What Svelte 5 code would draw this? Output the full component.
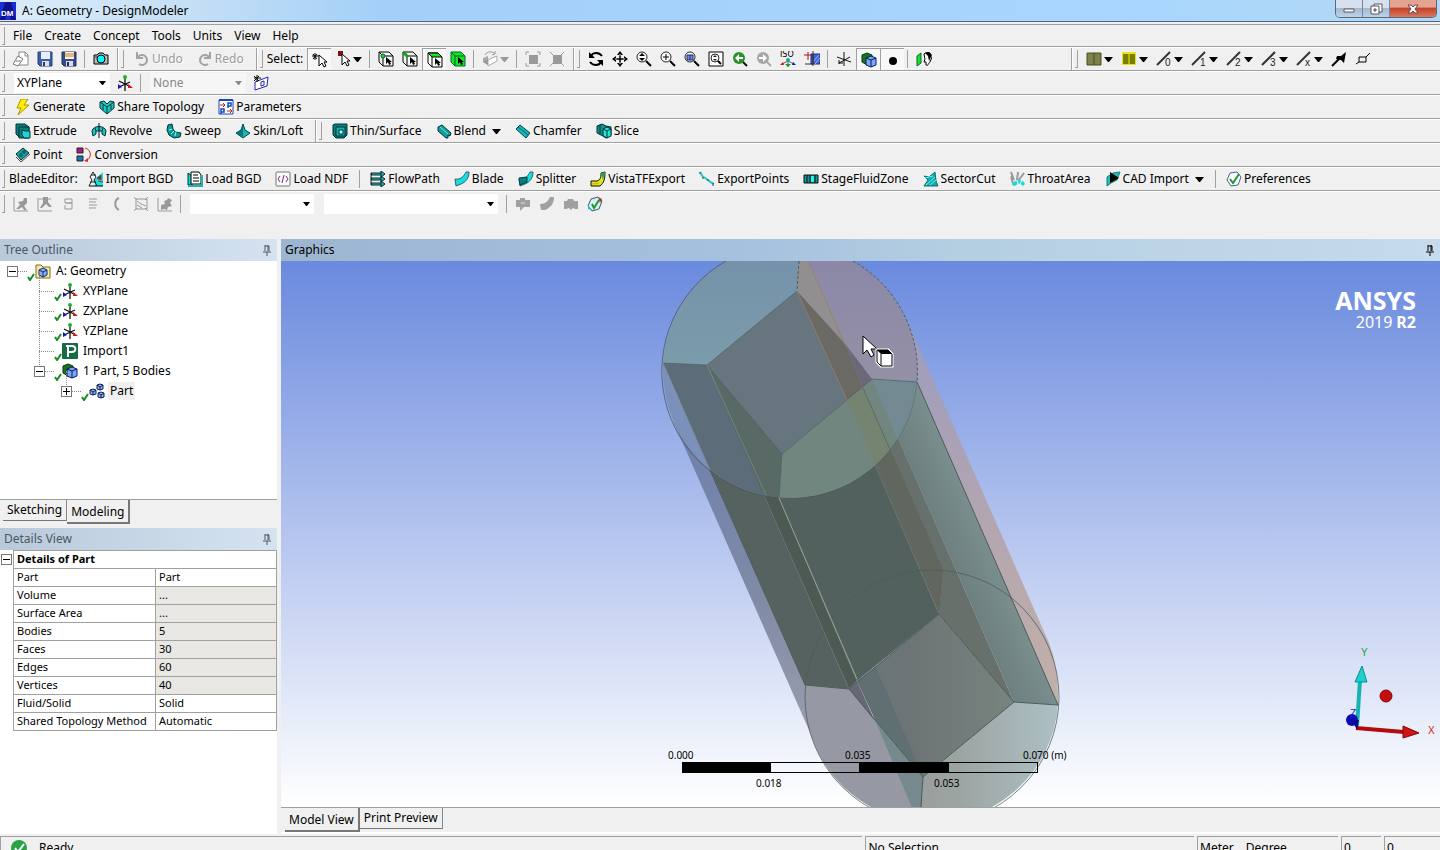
<script>
    const menus = ["File", "Create", "Concept", "Tools", "Units", "View", "Help"];

    const cursor = '<path d="M7 3v11l3-3 2 4 2-1-2-4h3z" fill="#fff" stroke="#000"/>';
    const smallCursor = '<path d="M8 6v7l2-2 1 3 2-1-1-2h2z" fill="#000"/>';
    const cubeOutline = '<path d="M1 1h10l4 4v10H5L1 11zM1 1l4 4h10M5 5v10" fill="#f4f4f4" stroke="#000"/>';
    const lens = '<path d="M10 10l5 5" stroke="#000" stroke-width="2"/><circle cx="6" cy="6" r="5" fill="#fff" stroke="#222"/>';
    const cubes = '<path d="M1 3l5-2 5 2v7l-5 3-5-3z" fill="#17721f" stroke="#053b0b"/><path d="M5 6l5-2 5 2v7l-5 2-5-2z" fill="#79a7f5" stroke="#0a1c5c"/><path d="M5 6l5 2 5-2M10 8v7" fill="none" stroke="#0a1c5c"/>';
    const blade = '<path d="M1 8c6 1 9-3 11-7l3 0c0 6-3 10-8 12l-5 2z" fill="#12dfe0" stroke="#35636a"/>';

    function edgeIcon(label) {
        return `<path d="M1 14L14 1" stroke="#333" stroke-width="2"/><text x="9" y="15" font-size="10" font-family="Liberation Sans, sans-serif" fill="#222">${label}</text>`;
    }

    const icons = {
        new: '<path d="M6 1h6l3 3v10H6z" fill="#fff" stroke="#888"/><path d="M12 1v4h3" fill="none" stroke="#888"/><path d="M0 13l5-8 5 3-5 7z" fill="#fff" stroke="#777"/><path d="M3 9h5v2H2z" fill="#bbb"/>',
        save: '<path d="M1 1h14v14H3l-2-2z" fill="#3d5fa8" stroke="#263f7b"/><path d="M4 1h9v7H4z" fill="#e8eefb"/><path d="M5 10h7v5H5z" fill="#ddd"/><path d="M6 11h2v4H6z" fill="#263f7b"/>',
        saveAs: '<path d="M1 1h14v14H3l-2-2z" fill="#2f4d8b" stroke="#1e315f"/><path d="M4 1h9v7H4z" fill="#fff2d8"/><path d="M4 3h9M4 5h9" stroke="#c47a24"/><path d="M5 10h7v5H5z" fill="#ddd"/><path d="M6 11h2v4H6z" fill="#1e315f"/>',
        camera: '<path d="M1 4h3l2-2h4l2 2h3v9H1z" fill="#b8b8b8" stroke="#000"/><circle cx="8" cy="8" r="4" fill="#0ff" stroke="#000"/><path d="M2 6h2" stroke="#c00"/>',
        undo: '<path d="M3 1v6h6M4 6a5 5 0 1 1 1 7" fill="none" stroke="#a3a3a3" stroke-width="2"/>',
        redo: '<path d="M13 1v6H7M12 6a5 5 0 1 0-1 7" fill="none" stroke="#a3a3a3" stroke-width="2"/>',
        selectNew: '<path d="M3 1v7M0 4h7M1 2l4 5M5 2L1 7" stroke="#000"/>' + cursor,
        selectMode: '<path d="M3 0h5v5H3z" fill="#7d0d13"/>' + cursor,
        point: cubeOutline + smallCursor + '<circle cx="5" cy="5" r="2" fill="#1edb24" stroke="#063"/>',
        edge: cubeOutline + smallCursor + '<path d="M1 1l5 5" stroke="#14a01b" stroke-width="3"/>',
        face: '<path d="M1 1h10l4 4v10H5L1 11z" fill="#fff" stroke="#000"/><path d="M1 1h10l4 4H5z" fill="#1be322" stroke="#000"/><path d="M5 5v10" stroke="#000"/>' + smallCursor,
        body: '<path d="M1 1h10l4 4v10H5L1 11z" fill="#1be322" stroke="#063"/><path d="M1 1l4 4h10M5 5v10" fill="none" stroke="#063"/>' + smallCursor,
        extend: '<path d="M1 7l5-2v9l-5-3z" fill="#aaa"/><path d="M6 9l4-2 5-2v5l-9 5z" fill="#fff" stroke="#aaa"/><path d="M1 11l5-3v6z" fill="#999"/><path d="M3 4c2-4 8-4 10-1l-3 1M13 0v3" fill="none" stroke="#999"/>',
        expand: '<path d="M4 4h9v9H4z" fill="#999"/><path d="M1 4V1h3M12 1h3v3M15 12v3h-3M4 15H1v-3" fill="none" stroke="#999"/>',
        shrink: '<path d="M4 4h9v9H4z" fill="#999"/><path d="M1 1l4 4M15 1l-4 4M15 15l-4-4M1 15l4-4" stroke="#999"/>',
        rotate: '<path d="M3 5c2-4 8-4 11 0M13 11c-2 4-8 4-11 0" fill="none" stroke="#000" stroke-width="2"/><path d="M1 1v6h6zM15 15V9H9z"/>',
        pan: '<path d="M8 2v12M2 8h12" stroke="#000"/><path d="M8 0l3 4H5zM8 16l3-4H5zM0 8l4-3v6zM16 8l-4-3v6z" fill="#000"/><path d="M7 3h2v2H7zM7 11h2v2H7zM3 7h2v2H3zM11 7h2v2h-2z" fill="#f0f0f0"/><path d="M8 2v12M2 8h12" stroke="#000"/>',
        zoom: lens + '<path d="M6 2l3 3H3zM6 10l3-3H3z"/>',
        zoomIn: lens + '<path d="M6 3v6M3 6h6" stroke="#000"/>',
        zoomBox: lens + '<path d="M3 4h6v5H3z" fill="#6c90e0" stroke="#15286f"/><path d="M6 4v5" stroke="#15286f"/>',
        zoomFit: '<path d="M1 1h14v14H1z" fill="#fff" stroke="#000"/><path d="M9 9l4 4" stroke="#000" stroke-width="2"/><circle cx="7" cy="7" r="4" fill="#fff" stroke="#222"/><path d="M7 4l2 2H5zM7 10l2-2H5z" fill="#222"/>',
        previous: '<path d="M10 10l5 5" stroke="#111" stroke-width="2"/><circle cx="7" cy="7" r="6" fill="#2c8f2c"/><path d="M3 7l4-4v3h4v2H7v3z" fill="#fff"/>',
        next: '<path d="M10 10l5 5" stroke="#aaa" stroke-width="2"/><circle cx="7" cy="7" r="6" fill="#a6a6a6"/><path d="M11 7L7 3v3H3v2h4v3z" fill="#fff"/>',
        iso: '<text x="0" y="6" font-size="8" font-family="DejaVu Sans, sans-serif" fill="#000">ISO</text><path d="M8 10v6M8 10l6 3" stroke="#2a8a3c"/><path d="M8 10L2 13" stroke="#c22"/><circle cx="8" cy="9" r="2" fill="#16a6b0"/><path d="M0 14l3-3 1 3z" fill="#d11"/><path d="M16 14l-3-3-1 3z" fill="#11c"/><path d="M5 13l3 3 3-3z" fill="#1a9a30"/>',
        lookAt: '<path d="M7 3h9v10H7z" fill="#4365d8" stroke="#192d86"/><path d="M8 12l7-8M11 13l5-6" stroke="#9db3ff"/><path d="M9 0v15M1 13h8V3" fill="none" stroke="#333"/><path d="M4 1v8M0 4h8" stroke="#b01515"/>',
        triad: '<path d="M8 1v14M1 6l14 5M3 12l11-6" stroke="#111"/><path d="M3 13V9M3 12h4" stroke="#111"/>',
        cubes,
        dot: '<circle cx="8" cy="9" r="4" fill="#000"/>',
        faceView: '<path d="M1 5l4-3v10l-4 3z" fill="#1be322" stroke="#063"/><path d="M8 3c3-3 8-1 8 3l-2 5c-2 1-1 4-4 3v-3H8l1-3z" fill="#fff" stroke="#000"/><path d="M9 2c4-2 7 0 6 4l-2 4-1-5z" fill="#000"/>',
        olive: '<path d="M1 2h14v12H1z" fill="#7e8050" stroke="#4c4e16"/><path d="M8 2v12" stroke="#4c4e16"/>',
        yellow: '<path d="M1 1h14v13H1z" fill="#e5e51d"/><path d="M2 3h12v10H2z" fill="#7b7d00"/><path d="M8 3v10" stroke="#f0f000"/>',
        edge0: edgeIcon("0"),
        edge1: edgeIcon("1"),
        edge2: edgeIcon("2"),
        edge3: edgeIcon("3"),
        edgeX: edgeIcon("x"),
        direction: '<path d="M1 15l8-8" stroke="#000" stroke-width="2"/><path d="M15 1l-2 11-3-3-5-1 1-3h4z"/>',
        vertex: '<path d="M4 6h7v5H4zM11 6l4-4M4 11l-3 2" fill="none" stroke="#000"/>',
        axes: '<path d="M8 3v13M2 6l12 6M2 12l11-5" stroke="#111" stroke-width="1.3"/><circle cx="8" cy="2" r="2" fill="#22b32b"/><path d="M11 9l5 4h-5z" fill="#d81818"/><path d="M1 14V9l4 3z" fill="#1616c8"/>',
        sketch: '<path d="M2 7l5-2 8-3-1 9-12 4z" fill="#fff" stroke="#2222b5"/><path d="M8 7l3-1v4l-3 1z" fill="none" stroke="#2222b5"/><path d="M4 0v7M1 3h7M1 1l5 5M6 1L1 6" stroke="#000"/>',
        generate: '<path d="M6 0h7L9 6h5L3 16l3-7H2z" fill="#ffef00" stroke="#a89400"/>',
        share: '<path d="M1 3l4-1 3 3 3-3 4 1v6l-7 6-7-6z" fill="#18c8c5" stroke="#133"/><path d="M1 3l7 5 7-5M8 8v7M4 6v5M12 6v5" fill="none" stroke="#133"/>',
        params: '<path d="M1 1h14v14H1z" fill="#fff" stroke="#1748b8"/><path d="M1 1h14" stroke="#1748b8" stroke-width="2"/><path d="M10 9V4h3v3h-3M3 15v-5h3v3H3" fill="none" stroke="#1748b8" stroke-width="1.5"/><path d="M2 6h5M5 4l2 2-2 2M9 12h5M12 10l2 2-2 2" fill="none" stroke="#b22"/>',
        extrude: '<path d="M1 1h9l4 3v3H4v7l-3-3z" fill="#087f80" stroke="#033"/><path d="M4 4h10v11H4z" fill="#0a7f80" stroke="#033"/><path d="M7 7l3 1h5v7H9l-2-3z" fill="#1dd5d4" stroke="#033"/>',
        revolve: '<path d="M1 8c1-6 13-6 14 0l-1 5-3-2V8H5v3l-3 2z" fill="#1bc5c5" stroke="#033"/><path d="M4 5l1 3M12 5l-1 3" stroke="#033"/><path d="M8 0v15" stroke="#111"/>',
        sweep: '<path d="M2 2l4-1 1 5 2 3 6 1-1 4-6 1-5-3-2-5z" fill="#0f9a9a" stroke="#033"/><path d="M3 7l3-1M5 11l3-3M9 13l1-4" stroke="#8ff"/>',
        skin: '<path d="M8 1l2 6 5 3-7 5-7-5 5-3z" fill="#18b7b6" stroke="#044"/><path d="M8 1v14l-7-5 5-3z" fill="#087777"/>',
        thin: '<path d="M1 2l2-1h12v11l-3 3H4l-3-3z" fill="#087f80" stroke="#033"/><path d="M4 4h9v9H4z" fill="#18aeb0" stroke="#033"/><path d="M7 7h4v4H7z" fill="#bff" stroke="#033"/>',
        blend: '<path d="M2 4l4-2 9 8-1 3-2-1v3l-2 0-8-7z" fill="#129d9d" stroke="#033"/><path d="M4 4l8 7" stroke="#66e6e2"/>',
        chamfer: '<path d="M1 6l4-4 10 8-4 5z" fill="#16b9b8" stroke="#044"/><path d="M3 4l10 8" stroke="#075e60"/>',
        slice: '<path d="M1 3l5-2 4 2 5 1v8l-5 3-3-2-6-3z" fill="#13908f" stroke="#033"/><path d="M7 6l4-2 4 2v7l-4 2-4-2z" fill="#27dfdd" stroke="#033"/><path d="M7 6l4 2 4-2M11 8v7M4 2v9" fill="none" stroke="#033"/>',
        pointTool: '<path d="M8 1l6 5-8 7-5-6z" fill="#16a3a4" stroke="#033"/><path d="M1 10l5 5 9-8" fill="none" stroke="#444"/><path d="M8 4h2v2H8zM5 7h2v2H5z" fill="#7ff" stroke="#033"/>',
        convert: '<path d="M1 1h6v5H1z" fill="#b1177c" stroke="#222"/><path d="M1 9h6v5H1z" fill="#1b73b8" stroke="#222"/><path d="M9 1c7 2 7 10 1 13" fill="none" stroke="#d12c2c"/><path d="M8 14l4-3v4z" fill="#d12c2c"/>',
        importBgd: '<path d="M6 9l9-8v14H7z" fill="#19e0df"/><path d="M1 15l3-6-2-3 3-5 3 5-2 3 3 6M2 11h6M3 4h5" fill="none" stroke="#222"/><path d="M9 7l4-3v5zM10 10l5 1" fill="#0a5c5d" stroke="#933"/><path d="M1 15h14" stroke="#000"/>',
        loadBgd: '<path d="M1 2l4 3v9H1z" fill="#19d5d4" stroke="#033"/><path d="M4 1h8l2 3v9H4z" fill="#fff" stroke="#000"/><path d="M6 4h5M6 7h6M6 10h6" stroke="#000"/><path d="M1 15h14V4" fill="none" stroke="#19b5b5" stroke-width="2"/>',
        ndf: '<rect x="1" y="1" width="14" height="14" rx="1" fill="#fafafa" stroke="#777"/><path d="M5 5L3 8l2 3M11 5l2 3-2 3M9 4l-2 8" fill="none" stroke="#7a2d78"/>',
        flow: '<path d="M1 3h11M1 8h11M1 13h11" stroke="#122" stroke-width="3"/><path d="M1 2v12" stroke="#122"/><path d="M2 3h10M2 8h10M2 13h10" stroke="#1cc"/><path d="M11 0l4 3-4 3zM11 5l4 3-4 3zM11 10l4 3-4 3z" fill="#1bb" stroke="#122"/>',
        blade,
        splitter: blade + '<path d="M1 7l8-1v5l-7 3z" fill="#087f80" stroke="#044"/>',
        vista: '<path d="M1 10h6c3-1 4-3 4-8l4-1c0 7-1 11-5 14H1z" fill="#d8e51b" stroke="#111"/><path d="M11 2l4-1-2 8z" fill="#25a64c"/><path d="M2 13l7-1" fill="none" stroke="#ff9d00"/>',
        exportPts: '<path d="M1 1l3 5c4 1 4 4 11 7" fill="none" stroke="#22c9ca" stroke-width="2"/><path d="M1 1v2M4 6v2M9 8v2M14 12v3" stroke="#444"/>',
        stage: '<path d="M1 4h14v8H1z" fill="#159797" stroke="#111"/><path d="M4 4v8M7 4v8M12 4v8" stroke="#111"/><path d="M8 5h3v6H8z" fill="#3ee"/>',
        sector: '<path d="M1 5l5 1 6-5 1 9 2 5H1l4-6z" fill="#16a9aa" stroke="#176b6e"/><path d="M3 14l9-8M7 14l6-5M2 7l8-2" stroke="#5ff"/>',
        throat: '<path d="M1 1l3 8M4 14C1 10 2 6 1 5M8 1L7 9M14 2l-6 8" fill="none" stroke="#999" stroke-width="2"/><path d="M2 14c2-6 11-7 13-1l-2 2c-3-3-5-3-8 0z" fill="#1bdbd9"/><path d="M7 9l1 4M12 9l-2 4" stroke="#fff"/>',
        cad: '<path d="M2 6l6-4 7-1-3 8-6 3-4 3z" fill="#18c0c1" stroke="#277"/><path d="M5 1l9 6-9 5z" fill="#000"/>',
        prefs: '<path d="M4 2l7-1 4 5-3 8-7 1-4-6z" fill="#f8fbff" stroke="#456590"/><path d="M4 8l3 4 6-9" fill="none" stroke="#27962b" stroke-width="2"/>',
        prefs3d: '<path d="M4 3l7-2 4 4-3 8-7 2-4-5z" fill="#d8eef4" stroke="#315c78"/><path d="M11 1l4 2-2 4z" fill="#a33"/><path d="M1 9l4 5-4-1z" fill="#19c5c5"/><path d="M5 8l2 4 5-8" fill="none" stroke="#27962b" stroke-width="2"/>',
        grayBlade: '<path d="M1 1v14h14" fill="none" stroke="#999"/><path d="M3 13l4-4-2-3 5-1 1-3h3v5l-3 3 3 4-3 0-2-3-3 2z" fill="#999"/>',
        grayTop: '<path d="M1 2v13h14M2 3h12" fill="none" stroke="#999"/><path d="M6 1h5v5l4 5h-3l-3-3-4 4H3l3-5z" fill="#999"/>',
        grayLoop: '<path d="M4 3h7v4H4zM5 7h6v6H4V9" fill="none" stroke="#999"/>',
        grayLines: '<path d="M4 3h8M4 6h7M4 9h8M4 12h7" stroke="#999"/>',
        grayArc: '<path d="M10 2C5 4 5 11 10 14" fill="none" stroke="#999" stroke-width="2"/>',
        grayBox: '<path d="M3 3h11v10H3zM1 1l3 3M15 1l-3 3M1 15l3-3M15 15l-3-3M4 5l4 3 5 2M4 9l5 3" fill="none" stroke="#999"/>',
        grayStar: '<path d="M1 2v13h14" fill="none" stroke="#999"/><path d="M4 14V9l4-1-1-3 3-1 1-2 4 2-2 3 2 3-4 1-1 3-3-1z" fill="#999"/>',
        grayBubble: '<path d="M1 4h4V2h5v2h5v7H9l-4 4v-4H1z" fill="#a0a0a0"/><path d="M6 7h4" stroke="#ddd"/>',
        grayWing: '<path d="M1 8c6 0 8-3 10-7h4c0 7-4 11-9 13H2z" fill="#a0a0a0"/>',
        grayRound: '<path d="M1 5h3l1-2h5l1 2h4v8h-3l-2-1-2 2-2-2-3 1H1z" fill="#a0a0a0"/>',
        root: '<path d="M1 2h5l2 2h7v11H1z" fill="#f6e9a2" stroke="#7e6b22"/><path d="M8 5l4 2v5l-4 2-4-2V7z" fill="#8caeff" stroke="#112a72"/><path d="M4 7l4 2 4-2M8 9v5" fill="none" stroke="#112a72"/>',
        parasolid: '<rect width="16" height="16" rx="1" fill="#166c44"/><path d="M6 14V3M4 3h6c5 0 4 6 0 6H7" fill="none" stroke="#fff" stroke-width="2"/>',
        part: '<path d="M11 1l3 1v4l-3 1-3-1V2zM4 6l3 1v4l-3 1-3-1V7zM12 9l3 1v4l-3 1-3-1v-4z" fill="#92aef7" stroke="#0d1f5a"/><path d="M8 2l3 2 3-2M11 4v3M1 7l3 2 3-2M4 9v3M9 10l3 2 3-2M12 12v3" fill="none" stroke="#0d1f5a"/>',
    };

    const fileTools = ["new", "save", "saveAs", "|", "camera"];
    const selectTools = [
        { icon: "selectNew", label: "New Selection", pressed: true },
        { icon: "selectMode", label: "Select Mode", menu: true },
        "|",
        { icon: "point", label: "Points" },
        { icon: "edge", label: "Edges" },
        { icon: "face", label: "Faces", pressed: true },
        { icon: "body", label: "Bodies" },
        "|",
        { icon: "extend", label: "Extend Selection", menu: true },
        "|",
        { icon: "expand", label: "Expand Selection" },
        { icon: "shrink", label: "Shrink Selection" },
    ];
    const viewTools = [
        "rotate", "pan", "zoom", "zoomIn", "zoomBox", "zoomFit", "previous", "next", "iso", "lookAt", "|", "triad",
        { icon: "cubes", label: "Display Model", pressed: true },
        { icon: "dot", label: "Display Points", pressed: true },
        "|", "faceView",
    ];
    const displayTools = [
        { icon: "olive", label: "Face Coloring", menu: true },
        { icon: "yellow", label: "Shared Coloring", menu: true },
        { icon: "edge0", label: "Edge 0", menu: true },
        { icon: "edge1", label: "Edge 1", menu: true },
        { icon: "edge2", label: "Edge 2", menu: true },
        { icon: "edge3", label: "Edge 3", menu: true },
        { icon: "edgeX", label: "Edge X", menu: true },
        "direction",
        "vertex",
    ];

    const generateRow = [["generate", "Generate"], ["share", "Share Topology"], ["params", "Parameters"]];
    const solidRow = [["extrude", "Extrude"], ["revolve", "Revolve"], ["sweep", "Sweep"], ["skin", "Skin/Loft"]];
    const modifyRow = [["thin", "Thin/Surface"], ["blend", "Blend", true], ["chamfer", "Chamfer"], ["slice", "Slice"]];
    const pointRow = [["pointTool", "Point"], ["convert", "Conversion"]];
    const bladeLoad = [["importBgd", "Import BGD"], ["loadBgd", "Load BGD"], ["ndf", "Load NDF"]];
    const bladeTools = [
        ["flow", "FlowPath"],
        ["blade", "Blade"],
        ["splitter", "Splitter"],
        ["vista", "VistaTFExport"],
        ["exportPts", "ExportPoints"],
        ["stage", "StageFluidZone"],
        ["sector", "SectorCut"],
        ["throat", "ThroatArea"],
        ["cad", "CAD Import", true],
    ];
    const sketchTools = ["grayBlade", "grayTop", "grayLoop", "grayLines", "grayArc", "grayBox", "grayStar"];
    const stageTools = ["grayBubble", "grayWing", "grayRound", "prefs3d"];

    const tree = [
        { level: 0, toggle: "-", icon: "root", text: "A: Geometry" },
        { level: 1, icon: "axes", text: "XYPlane" },
        { level: 1, icon: "axes", text: "ZXPlane" },
        { level: 1, icon: "axes", text: "YZPlane" },
        { level: 1, icon: "parasolid", text: "Import1" },
        { level: 1, toggle: "-", icon: "cubes", text: "1 Part, 5 Bodies" },
        { level: 2, toggle: "+", icon: "part", text: "Part", selected: true },
    ];

    const details = [
        ["Part", "Part", true],
        ["Volume", "..."],
        ["Surface Area", "..."],
        ["Bodies", "5"],
        ["Faces", "30"],
        ["Edges", "60"],
        ["Vertices", "40"],
        ["Fluid/Solid", "Solid", true],
        ["Shared Topology Method", "Automatic", true],
    ];
</script>

{#snippet icon(name)}
    <svg class="icon" viewBox="0 0 16 16" aria-hidden="true">{@html icons[name]}</svg>
{/snippet}

{#snippet arrow()}
    <svg class="arrow" viewBox="0 0 9 5" aria-hidden="true"><path d="M0 0h9L5 5H4z" fill="currentColor" /></svg>
{/snippet}

{#snippet iconTools(tools)}
    {#each tools as tool}
        {#if tool === "|"}
            <span class="separator"></span>
        {:else}
            <button
                class="tool"
                class:pressed={tool.pressed}
                class:with-menu={tool.menu}
                class:dim={tool.icon === "extend"}
                aria-label={tool.label ?? tool}
            >
                {@render icon(tool.icon ?? tool)}
                {#if tool.menu}{@render arrow()}{/if}
            </button>
        {/if}
    {/each}
{/snippet}

{#snippet textTools(tools)}
    {#each tools as [name, label, menu]}
        <button class="text-tool">
            {@render icon(name)}<span>{label}</span>
            {#if menu}{@render arrow()}{/if}
        </button>
    {/each}
{/snippet}

{#snippet panelTitle(text, active)}
    <header class="panel-title" class:active>
        <span>{text}</span>
        <button aria-label="Pin {text}">
            <svg viewBox="0 0 8 11"><path d="M2 0v6M5 0v6M2 1h4v5M0 7h8M4 7v4" fill="none" stroke="currentColor" /></svg>
        </button>
    </header>
{/snippet}

<div class="app">
    <header class="title-bar">
        <svg class="app-logo" viewBox="0 0 16 18" aria-hidden="true">
            <rect width="16" height="18" fill="#1a2bd8" />
            <path d="M5 0h6l5 18h-5L8 8l-3 10H0z" fill="#0d1288" />
            <text x="1" y="14" font-size="8" font-weight="700" font-family="Liberation Sans, sans-serif" fill="#fff">DM</text>
        </svg>
        <h1>A: Geometry - DesignModeler</h1>
        <div class="window-buttons">
            <button aria-label="Minimize"><svg viewBox="0 0 14 12"><path d="M2 6h10v3H2z" fill="#fff" stroke="#556" /></svg></button>
            <button aria-label="Restore"><svg viewBox="0 0 14 12"><path d="M5 1h8v8H5z" fill="#fff" stroke="#556" /><path d="M2 3h8v8H2z" fill="#fff" stroke="#556" /><path d="M5 6h2v2H5z" fill="#bcd" stroke="#556" /></svg></button>
            <button class="close" aria-label="Close"><svg viewBox="0 0 14 12"><path d="M2 2h3l2 2 2-2h3L9 6l3 4H9L7 8l-2 2H2l3-4z" fill="#fff" stroke="#645" /></svg></button>
        </div>
    </header>

    <nav class="row menu-bar">
        <span class="grip"></span>
        {#each menus as menu}
            <button>{menu}</button>
        {/each}
    </nav>

    <div class="row">
        <div class="group"><span class="grip"></span>{@render iconTools(fileTools)}</div>
        <div class="group">
            <span class="grip"></span>
            <button class="text-tool" disabled>{@render icon("undo")}<span>Undo</span></button>
            <button class="text-tool" disabled>{@render icon("redo")}<span>Redo</span></button>
        </div>
        <div class="group"><span class="grip"></span><span class="caption">Select:</span>{@render iconTools(selectTools)}</div>
        <div class="group grow"><span class="grip"></span>{@render iconTools(viewTools)}</div>
        <div class="group display"><span class="grip"></span>{@render iconTools(displayTools)}</div>
    </div>

    <div class="row">
        <span class="grip"></span>
        <span class="combo plane">
            <select aria-label="Active plane"><option>XYPlane</option></select>{@render arrow()}
        </span>
        {@render iconTools(["axes", "|"])}
        <span class="combo sketch">
            <select aria-label="Active sketch" disabled><option>None</option></select>{@render arrow()}
        </span>
        {@render iconTools(["sketch"])}
    </div>

    <div class="row"><span class="grip"></span>{@render textTools(generateRow)}</div>

    <div class="row">
        <div class="group"><span class="grip"></span>{@render textTools(solidRow)}</div>
        <div class="group grow"><span class="grip"></span>{@render textTools(modifyRow)}</div>
    </div>

    <div class="row"><span class="grip"></span>{@render textTools(pointRow)}</div>

    <div class="row">
        <span class="grip"></span><span class="caption">BladeEditor:</span>
        {@render textTools(bladeLoad)}<span class="separator"></span>
        {@render textTools(bladeTools)}<span class="separator"></span>
        {@render textTools([["prefs", "Preferences"]])}
    </div>

    <div class="row last-row">
        <span class="grip"></span>
        {@render iconTools([...sketchTools, "|"])}
        <span class="combo blade-row">
            <select aria-label="Blade row"><option></option></select>{@render arrow()}
        </span>
        <span class="combo stage-row">
            <select aria-label="Stage"><option></option></select>{@render arrow()}
        </span>
        {@render iconTools(["|", ...stageTools])}
    </div>

    <main>
        <aside>
            {@render panelTitle("Tree Outline")}
            <ul class="tree">
                {#each tree as node}
                    <li class="level-{node.level}" class:branch={node.level > 0}>
                        {#if node.toggle}
                            <button class="toggle" aria-label="Toggle {node.text}">
                                <svg viewBox="0 0 11 11">
                                    <path d="M0 0h11v11H0z" fill="#fff" stroke="#777" stroke-width="2" />
                                    <path d={node.toggle === "+" ? "M2 5.5h7M5.5 2v7" : "M2 5.5h7"} stroke="#000" />
                                </svg>
                            </button>
                        {/if}
                        <span class="twig" class:long={!node.toggle}></span>
                        <svg class="check" viewBox="0 0 8 8"><path d="M1 4l2 3 4-6" fill="none" stroke="#1c8a22" stroke-width="2" /></svg>
                        {@render icon(node.icon)}
                        <span class="node-text" class:selected={node.selected}>{node.text}</span>
                    </li>
                {/each}
            </ul>
            <div class="tabs tree-tabs">
                <button>Sketching</button>
                <button class="current">Modeling</button>
            </div>
            {@render panelTitle("Details View")}
            <section class="details">
                <button class="toggle" aria-label="Collapse details">
                    <svg viewBox="0 0 11 11">
                        <path d="M0 0h11v11H0z" fill="#fff" stroke="#777" stroke-width="2" />
                        <path d="M2 5.5h7" stroke="#000" />
                    </svg>
                </button>
                <table>
                    <thead><tr><th colspan="2">Details of Part</th></tr></thead>
                    <tbody>
                        {#each details as [key, value, editable]}
                            <tr>
                                <td class="key">{key}</td>
                                <td class:locked={!editable}>{value}</td>
                            </tr>
                        {/each}
                    </tbody>
                </table>
            </section>
        </aside>

        <section class="graphics">
            {@render panelTitle("Graphics", true)}
            <div class="canvas">
                <svg class="scene" viewBox="281 261 1159 546" preserveAspectRatio="xMidYMid slice">
                    <defs>
                        <linearGradient id="left" x1="0" y1="0" x2="0" y2="1">
                            <stop offset="0" stop-color="#687caf" /><stop offset=".6" stop-color="#7f8aa6" /><stop offset="1" stop-color="#9c9faf" />
                        </linearGradient>
                        <linearGradient id="right" x1="0" y1="0" x2="0" y2="1">
                            <stop offset="0" stop-color="#9c9bc0" /><stop offset=".5" stop-color="#b1a5b0" /><stop offset="1" stop-color="#c3b0a8" />
                        </linearGradient>
                        <linearGradient id="glass" x1="905" y1="540" x2="985" y2="505" gradientUnits="userSpaceOnUse">
                            <stop offset="0" stop-color="#62706e" /><stop offset=".45" stop-color="#6f8180" /><stop offset="1" stop-color="#7d9392" />
                        </linearGradient>
                        <linearGradient id="face" x1="890" x2="1058" gradientUnits="userSpaceOnUse">
                            <stop offset="0" stop-color="#979a99" /><stop offset=".4" stop-color="#9ca4a2" /><stop offset="1" stop-color="#adc0c4" />
                        </linearGradient>
                        <linearGradient id="core" x1="849" x2="1014" gradientUnits="userSpaceOnUse">
                            <stop offset="0" stop-color="#68767a" /><stop offset=".4" stop-color="#6e7475" /><stop offset="1" stop-color="#77847f" />
                        </linearGradient>
                        <linearGradient id="cyan" x1="0" y1="0" x2="0" y2="1">
                            <stop offset="0" stop-color="#728fa9" /><stop offset="1" stop-color="#7b9cab" />
                        </linearGradient>
                        <linearGradient id="mauve" x1="0" y1="0" x2="0" y2="1">
                            <stop offset="0" stop-color="#8986a8" /><stop offset="1" stop-color="#9490a5" />
                        </linearGradient>
                        <clipPath id="cap"><circle cx="790" cy="371" r="127" /></clipPath>
                    </defs>

                    <!-- cylinder walls, left to right -->
                    <path d="M663 363L805 685L816 746L674 423z" fill="url(#left)" />
                    <path d="M907 320L1049 643Q1059 668 1058 705L917 382z" fill="url(#right)" />
                    <path d="M663 363L805 685L849 689L707 365z" fill="#56625f" />
                    <path d="M707 365L849 689L857 681L779 498z" fill="#4d5a54" />
                    <path d="M779 498L857 681L939 614L860 430z" fill="#52615d" />
                    <path d="M847 400L939 614L943 570L863 388z" fill="#61675e" />
                    <path d="M863 388L943 570L939 614L1014 702L876 388z" fill="#68706c" />
                    <path d="M872 379L1014 702L1058 705L917 382z" fill="url(#glass)" />

                    <!-- near end cap -->
                    <g clip-path="url(#cap)">
                        <rect x="660" y="240" width="260" height="262" fill="#7b91bc" />
                        <path d="M650 230h151l-4 61-90 74-44-2z" fill="url(#cyan)" />
                        <path d="M801 230h130v152l-59-3-75-88z" fill="url(#mauve)" />
                        <path d="M663 363l44 2 60 135h-44z" fill="#5d6c79" />
                        <path d="M797 291l-90 74 75 89 65-54z" fill="#67757e" />
                        <path d="M707 365l75 89-3 48h-13z" fill="#586966" />
                        <path d="M799 255h7l40 90-49-54z" fill="#918f8f" />
                        <path d="M797 291l49 54 17 43-16 12z" fill="#6b6963" />
                        <path d="M846 345l26 34-9 9z" fill="#6c687a" />
                        <path d="M782 454l90-75 45 3v125H779z" fill="#71867f" />
                        <path d="M847 400l16-12 38 86-16 12z" fill="#758470" />
                        <path d="M872 379l45 3v70l-12 6z" fill="#738a92" />
                    </g>

                    <!-- far end cap -->
                    <path d="M805 685l44 4 74 88-2 45A127 127 0 0 1 805 685z" fill="#9698a3" />
                    <path d="M1014 702l44 3A127 127 0 0 1 921 822l2-45z" fill="url(#face)" />
                    <path d="M875 667l64-53 75 88-91 75z" fill="url(#core)" />
                    <path d="M849 689l8-8 18 40z" fill="#676778" />
                    <path d="M857 681l18-14 48 110-48-57z" fill="#5f6f72" />
                    <path d="M875 720l48 57-2 45-8-12z" fill="#76898d" />

                    <g fill="none" stroke="#4c5a59">
                        <path d="M853 261A127 127 0 0 1 917 382" stroke-dasharray="3 2" />
                        <path d="M726 261A127 127 0 0 0 779 498" opacity=".8" />
                        <path d="M779 498A127 127 0 0 0 917 382" opacity=".35" />
                        <path d="M799 261l-2 30" stroke-dasharray="3 2" />
                        <path d="M663 363l44 2 90-74M707 365l75 89-3 44M782 454l90-75 45 3" opacity=".6" />
                        <path d="M710 470l95 215 44 4 90-75 75 88 44 3L917 382" />
                        <path d="M939 614l4-44-80-182" opacity=".6" />
                        <path d="M849 689l74 88 91-75M923 777l-2 30" />
                        <path d="M875 667l48 110" opacity=".6" />
                        <circle cx="932" cy="697" r="127" opacity=".75" />
                    </g>
                    <path d="M779 498l78 181" stroke="#90a497" />
                    <path d="M663 363l47 107M707 365l59 130" stroke="#87988f" opacity=".6" />
                    <path d="M797 291l50 109M808 261l38 86" stroke="#9b7f62" opacity=".7" />

                    <!-- scale -->
                    <g shape-rendering="crispEdges">
                        <rect x="682" y="762" width="355" height="10" fill="none" stroke="#000" />
                        <path d="M682 762h89v10h-89zM859 762h90v10h-90z" />
                    </g>
                    <g class="scale-text">
                        <text x="668" y="759">0.000</text>
                        <text x="845" y="759">0.035</text>
                        <text x="1023" y="759">0.070 (m)</text>
                        <text x="756" y="787">0.018</text>
                        <text x="934" y="787">0.053</text>
                    </g>

                    <!-- orientation triad -->
                    <path d="M1357 726l3-46" stroke="#13b5b1" stroke-width="4" />
                    <path d="M1362 666l5 16h-12z" fill="#1fd0ca" stroke="#0b8f8c" />
                    <path d="M1356 728l48 4" stroke="#b00c0c" stroke-width="4" />
                    <path d="M1403 726l16 7-16 5z" fill="#d01414" stroke="#840505" />
                    <circle cx="1386" cy="696" r="6" fill="#c50d0d" stroke="#870707" />
                    <circle cx="1352" cy="720" r="6" fill="#0c0cb0" />
                    <path d="M1353 722l6-2-2 10z" fill="#070782" />
                    <g class="axis-text">
                        <text x="1361" y="656" fill="#16a022">Y</text>
                        <text x="1428" y="734" fill="#e01818">X</text>
                        <text x="1350" y="717" fill="#1818d0">Z</text>
                    </g>

                    <!-- pointer -->
                    <path d="M863 336v18l4-4 4 7 3-2-3-6h6z" fill="#fff" stroke="#000" />
                    <path d="M877 350h11l4 4v12h-11l-4-4z" fill="#fff" stroke="#fff" stroke-width="3" />
                    <path d="M877 350h11l4 4v12h-11l-4-4zM881 354v12" fill="#fff" stroke="#000" />
                    <path d="M877 350h11l4 4h-11z" />
                </svg>
                <div class="brand">
                    <strong>ANSYS</strong>
                    <div class="version"><span>2019</span><b>R2</b></div>
                </div>
            </div>
            <div class="tabs view-tabs">
                <button class="current">Model View</button>
                <button>Print Preview</button>
            </div>
        </section>
    </main>

    <footer>
        <span class="ready">
            <svg viewBox="0 0 16 16"><circle cx="8" cy="8" r="8" fill="#2aa344" /><path d="M4 8l3 4 6-8" fill="none" stroke="#fff" stroke-width="2" /></svg>
            Ready
        </span>
        <span class="selection">No Selection</span>
        <span class="units"><span>Meter</span><span>Degree</span></span>
        <span class="count">0</span>
        <span class="count wide">0</span>
    </footer>
</div>

<style>
    :global(body) {
        margin: 0;
        overflow: hidden;
    }

    .app {
        display: flex;
        flex-direction: column;
        height: 100vh;
        overflow: hidden;
        background: #f0f0f0;
        color: #000;
        font-family: "Noto Sans", "Open Sans", sans-serif;
        font-size: 12px;
        line-height: 16px;
    }

    button,
    select {
        margin: 0;
        padding: 0;
        border: 0;
        background: none;
        color: inherit;
        font: inherit;
    }

    svg {
        display: block;
        flex: none;
    }

    .title-bar {
        display: flex;
        flex: none;
        align-items: center;
        height: 21px;
        border-bottom: 1px solid #4b6788;
        background: linear-gradient(90deg, #dcecf8 0, #c3def5 200px, #a4d0f8 380px, #a8d6fc 80%, #b4d8f4 100%);
    }

    .app-logo {
        width: 16px;
        height: 18px;
    }

    h1 {
        flex: 1;
        margin: 0 0 0 6px;
        font-size: 12px;
        font-weight: 400;
    }

    .window-buttons {
        display: flex;
        align-self: flex-start;
        margin-right: 3px;
        border: 1px solid #55697f;
        border-top: 0;
        border-radius: 0 0 5px 5px;
        overflow: hidden;
    }

    .window-buttons button {
        display: flex;
        align-items: center;
        justify-content: center;
        width: 27px;
        height: 17px;
        border-right: 1px solid #7189a3;
        background: linear-gradient(#d5e2ee 45%, #a5b9cd 50%, #bdd4e8);
    }

    .window-buttons .close {
        width: 46px;
        border-right: 0;
        background: linear-gradient(#e3a393 40%, #c5432c 50%, #d9785e);
    }

    .window-buttons svg {
        width: 14px;
        height: 12px;
    }

    .row {
        display: flex;
        flex: none;
        align-items: center;
        height: 22px;
        border-top: 1px solid #fff;
        border-bottom: 1px solid #a0a0a0;
    }

    .menu-bar {
        gap: 12px;
        height: 21px;
        margin-top: 2px;
        border-top: 1px solid #a0a0a0;
    }

    .menu-bar .grip {
        margin-right: -4px;
    }

    .last-row {
        height: 23px;
        margin-bottom: 24px;
        border-bottom: 0;
    }

    .group {
        display: flex;
        align-items: center;
        height: 22px;
        padding-right: 4px;
        border-right: 1px solid #a0a0a0;
    }

    .group + .group {
        border-left: 1px solid #fff;
    }

    .group:last-child {
        border-right: 0;
    }

    .grow {
        flex: 1;
    }

    .display {
        flex: 0 0 363px;
    }

    .grip {
        flex: none;
        width: 2px;
        height: 17px;
        margin: 0 4px 0 2px;
        border-right: 1px solid #a0a0a0;
        border-bottom: 1px solid #a0a0a0;
    }

    .separator {
        flex: none;
        width: 1px;
        height: 18px;
        margin: 0 4px 0 3px;
        background: #a0a0a0;
    }

    .icon {
        width: 16px;
        height: 16px;
    }

    .arrow {
        width: 9px;
        height: 5px;
    }

    .tool {
        display: flex;
        flex: none;
        align-items: center;
        justify-content: center;
        box-sizing: border-box;
        width: 24px;
        height: 22px;
    }

    .with-menu {
        width: 35px;
        gap: 2px;
    }

    .pressed {
        border-top: 1px solid #a0a0a0;
        border-left: 1px solid #a0a0a0;
        background: #f8f8f8;
    }

    .dim {
        color: #999;
    }

    .text-tool {
        display: flex;
        align-items: center;
        gap: 2px;
        padding: 0 8px 0 6px;
        white-space: nowrap;
    }

    .text-tool .arrow {
        margin-left: 4px;
    }

    .text-tool:disabled {
        color: #9a9a9a;
        text-shadow: 1px 1px #fff;
    }

    .caption {
        padding-right: 4px;
    }

    .combo {
        position: relative;
        display: flex;
        align-items: center;
        height: 20px;
        background: #fff;
    }

    .combo select {
        width: 100%;
        height: 20px;
        padding-left: 3px;
        appearance: none;
        opacity: 1;
    }

    .combo .arrow {
        position: absolute;
        right: 4px;
        width: 7px;
        height: 4px;
        pointer-events: none;
    }

    .plane {
        width: 96px;
        margin: 0 3px 0 5px;
    }

    .sketch {
        width: 96px;
        margin: 0 3px 0 5px;
        background: #f6f6f6;
        color: #888;
    }

    .blade-row {
        width: 124px;
        margin-left: 5px;
    }

    .stage-row {
        width: 174px;
        margin: 0 5px 0 10px;
    }

    main {
        display: flex;
        flex: 1;
        gap: 4px;
        min-height: 0;
    }

    aside {
        display: flex;
        flex: none;
        flex-direction: column;
        width: 277px;
    }

    .panel-title {
        display: flex;
        flex: none;
        align-items: center;
        justify-content: space-between;
        height: 22px;
        padding: 0 6px 0 4px;
        background: linear-gradient(90deg, #b9c9da, #d5e3f1);
        color: #4a5763;
    }

    .panel-title.active {
        background: linear-gradient(90deg, #9cb6d2, #a6c1de 40%, #b5cfe2 60%, #c6dbec);
        color: #000;
    }

    .panel-title svg {
        width: 8px;
        height: 11px;
    }

    .tree {
        flex: 1;
        margin: 0;
        padding: 0;
        background: #fff;
        list-style: none;
    }

    .tree li {
        position: relative;
        display: flex;
        align-items: center;
        height: 20px;
    }

    .level-0 {
        padding-left: 7px;
    }

    .level-1 {
        padding-left: 34px;
    }

    .level-2 {
        padding-left: 61px;
    }

    .branch::before {
        content: "";
        position: absolute;
        top: -10px;
        left: 39px;
        height: 20px;
        border-left: 1px dotted #888;
    }

    .level-2::before {
        left: 66px;
    }

    .toggle {
        z-index: 1;
        flex: none;
        width: 11px;
        height: 11px;
    }

    .toggle svg {
        width: 11px;
        height: 11px;
    }

    .twig {
        width: 9px;
        border-top: 1px dotted #888;
    }

    .twig.long {
        width: 15px;
        margin-left: 5px;
    }

    .check {
        align-self: flex-end;
        width: 8px;
        height: 8px;
    }

    .node-text {
        margin-left: 3px;
        padding: 1px 2px;
    }

    .node-text.selected {
        background: #f0f0f0;
    }

    .tabs {
        display: flex;
        flex: none;
        align-items: flex-start;
        border-top: 1px solid #a0a0a0;
    }

    .tabs button {
        padding: 2px 4px;
        border-right: 1px solid #888;
        border-bottom: 1px solid #777;
    }

    .tabs .current {
        padding: 4px 4px 2px;
        border-right: 2px solid #777;
        border-bottom: 2px solid #777;
    }

    .tree-tabs {
        height: 28px;
        padding-left: 3px;
    }

    .details {
        display: flex;
        align-items: flex-start;
        height: 284px;
        background: #fff;
    }

    .details .toggle {
        margin: 4px 1px;
    }

    table {
        flex: 1;
        border-collapse: collapse;
    }

    th,
    td {
        padding: 0 3px 1px;
        border: 1px solid #a0a0a0;
        font-size: 11px;
        line-height: 16px;
        text-align: left;
        white-space: nowrap;
    }

    .key {
        width: 135px;
    }

    .locked {
        background: #e8e7e3;
    }

    .graphics {
        display: flex;
        flex: 1;
        flex-direction: column;
        min-width: 0;
    }

    .canvas {
        position: relative;
        flex: 1;
        min-height: 0;
        overflow: hidden;
        background: linear-gradient(#6a8ade, #fff);
    }

    .scene {
        width: 100%;
        height: 100%;
    }

    .scale-text {
        font-size: 10px;
    }

    .axis-text {
        font-family: "Liberation Sans", sans-serif;
        font-size: 10px;
    }

    .brand {
        position: absolute;
        top: 26px;
        right: 24px;
        display: flex;
        flex-direction: column;
        align-items: flex-end;
        color: #fff;
        font-size: 16px;
        line-height: 18px;
    }

    .brand strong {
        font-size: 25px;
        line-height: 26px;
    }

    .version {
        display: flex;
        gap: 4px;
    }

    .view-tabs {
        height: 24px;
        padding-left: 4px;
        border-bottom: 2px solid #fff;
    }

    footer {
        display: flex;
        flex: none;
        gap: 3px;
        height: 14px;
        padding-top: 2px;
        overflow: hidden;
        line-height: 21px;
    }

    footer > span {
        border-top: 1px solid #a0a0a0;
        border-left: 1px solid #a0a0a0;
        padding-left: 2px;
    }

    .ready {
        display: flex;
        flex: 863;
        gap: 12px;
    }

    .ready svg {
        width: 16px;
        height: 16px;
        margin: 3px 0 0 8px;
    }

    .selection {
        flex: 327;
    }

    .units {
        display: flex;
        flex: none;
        gap: 12px;
        width: 138px;
    }

    .count {
        flex: none;
        width: 37px;
    }

    .wide {
        width: 53px;
    }
</style>
